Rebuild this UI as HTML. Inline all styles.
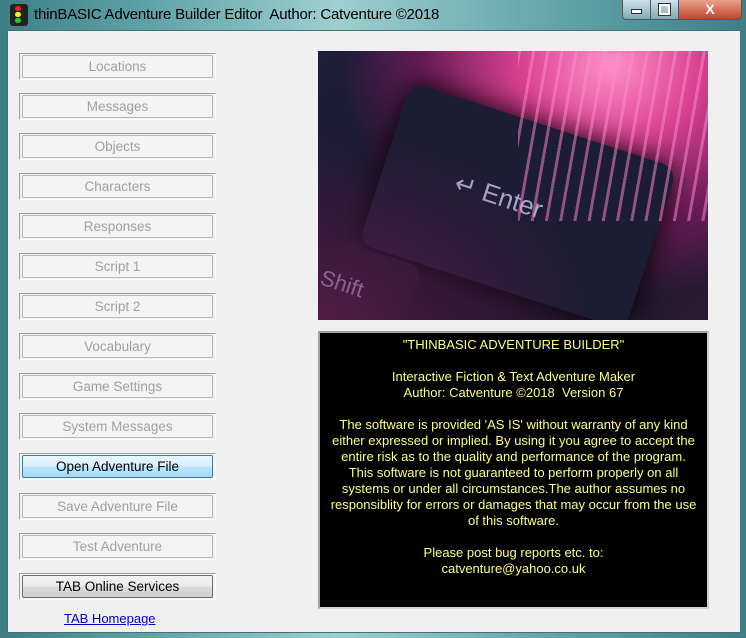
<!DOCTYPE html>
<html><head><meta charset="utf-8"><style>
body{margin:0;width:746px;height:638px;overflow:hidden;position:relative;font-family:"Liberation Sans",sans-serif;
background:linear-gradient(90deg,#3e7f86 0%,#5fa3a8 20%,#9fcfd0 45%,#6aaab0 70%,#3c7f88 100%);}
.title{position:absolute;left:34px;top:6px;font-size:15px;color:#000;letter-spacing:-0.2px}
.client{position:absolute;left:7px;top:30px;width:732px;height:601px;background:#f0f0f0;border:1px solid #4a6e74}
.btn{position:absolute;left:19px;width:195px;height:25px;border:1px solid #a0a0a0;border-right-color:#fff;border-bottom-color:#fff;}
.btn div{position:absolute;left:2px;top:1px;width:189px;height:21px;border:1px solid #b8b8b8;border-radius:2px;background:#f4f4f4;color:#a0a0a0;font-size:13.5px;text-align:center;line-height:21px}
.btn.en div{background:linear-gradient(#f2f2f2 0%,#ebebeb 50%,#dcdcdc 51%,#cfcfcf 100%);color:#000;border-color:#707070}
.btn.hl div{border-color:#3c7fb1;background:linear-gradient(#eaf6fd 0%,#d9f0fc 50%,#bee6fd 51%,#a7d9f5 100%)}
.img{position:absolute;left:318px;top:51px;width:390px;height:269px;overflow:hidden;
background:radial-gradient(ellipse at 75% 5%,#ff8fc8 0%,#d8408f 22%,#6a1c58 45%,transparent 65%),linear-gradient(135deg,#1e1e3a 0%,#141428 50%,#2a1a34 100%);}
.box{position:absolute;left:318px;top:331px;width:387px;height:274px;background:#000;border:2px solid #d0d0d0;border-top-color:#a0a0a0;border-left-color:#a0a0a0;color:#ffff80;font-size:13px;text-align:center;line-height:16px}
.tb{position:absolute;top:0;height:19px;border:1px solid #556;border-top:none}
</style></head><body>
<div style="position:absolute;left:10px;top:4px;width:18px;height:22px;background:#222;border-radius:3px"></div>
<div style="position:absolute;left:15px;top:6px;width:6px;height:5px;background:#e22;border-radius:3px"></div>
<div style="position:absolute;left:15px;top:12px;width:6px;height:5px;background:#ee2;border-radius:3px"></div>
<div style="position:absolute;left:15px;top:18px;width:6px;height:5px;background:#2c2;border-radius:3px"></div>
<div class="title">thinBASIC Adventure Builder Editor&nbsp; Author: Catventure ©2018</div>
<div class="tb" style="left:622px;width:27px;border-radius:0 0 0 4px;background:linear-gradient(#cfe3e8,#7fa9b3)"></div>
<div class="tb" style="left:650px;width:27px;background:linear-gradient(#cfe3e8,#7fa9b3)"></div>
<div class="tb" style="left:678px;width:62px;border-radius:0 0 4px 0;background:linear-gradient(#e8a08a,#c2442a);color:#fff;text-align:center;font-weight:bold;font-size:14px;line-height:18px">X</div>
<div style="position:absolute;left:631px;top:9px;width:9px;height:3px;background:#fff;border:1px solid #333"></div>
<div style="position:absolute;left:659px;top:4px;width:7px;height:7px;border:2px solid #fff;outline:1px solid #333"></div>
<div class="client"></div>
<div class="btn" style="top:53px"><div>Locations</div></div>
<div class="btn" style="top:93px"><div>Messages</div></div>
<div class="btn" style="top:133px"><div>Objects</div></div>
<div class="btn" style="top:173px"><div>Characters</div></div>
<div class="btn" style="top:213px"><div>Responses</div></div>
<div class="btn" style="top:253px"><div>Script 1</div></div>
<div class="btn" style="top:293px"><div>Script 2</div></div>
<div class="btn" style="top:333px"><div>Vocabulary</div></div>
<div class="btn" style="top:373px"><div>Game Settings</div></div>
<div class="btn" style="top:413px"><div>System Messages</div></div>
<div class="btn en hl" style="top:453px"><div>Open Adventure File</div></div>
<div class="btn" style="top:493px"><div>Save Adventure File</div></div>
<div class="btn" style="top:533px"><div>Test Adventure</div></div>
<div class="btn en" style="top:573px"><div>TAB Online Services</div></div>
<div style="position:absolute;left:64px;top:611px;font-size:13px;color:#00c;text-decoration:underline">TAB Homepage</div>
<div class="img">
<div style="position:absolute;left:60px;top:70px;width:280px;height:170px;background:#1c1c34;border-radius:16px;transform:rotate(18deg);box-shadow:0 0 30px #000"></div>
<div style="position:absolute;left:135px;top:130px;font-size:26px;color:#a8a8cc;transform:rotate(18deg)">↵ Enter</div>
<div style="position:absolute;left:-30px;top:195px;width:120px;height:110px;background:#18182a;border-radius:12px;transform:rotate(18deg)"></div>
<div style="position:absolute;left:2px;top:220px;font-size:22px;color:#a0a0c0;transform:rotate(18deg)">Shift</div>
<div style="position:absolute;left:200px;top:0;width:190px;height:170px;background:repeating-linear-gradient(100deg,rgba(255,140,210,.5) 0 3px,transparent 3px 14px)"></div>
<div style="position:absolute;left:0;top:0;width:390px;height:269px;background:radial-gradient(ellipse at 0% 100%,rgba(120,30,90,.6),transparent 50%)"></div>
</div>
<div class="box"><div style="padding-top:4px">"THINBASIC ADVENTURE BUILDER"<br><br>Interactive Fiction &amp; Text Adventure Maker<br>Author: Catventure ©2018&nbsp; Version 67<br><br>The software is provided 'AS IS' without warranty of any kind<br>either expressed or implied. By using it you agree to accept the<br>entire risk as to the quality and performance of the program.<br>This software is not guaranteed to perform properly on all<br>systems or under all circumstances.The author assumes no<br>responsiblity for errors or damages that may occur from the use<br>of this software.<br><br>Please post bug reports etc. to:<br>catventure@yahoo.co.uk</div></div>
</body></html>
